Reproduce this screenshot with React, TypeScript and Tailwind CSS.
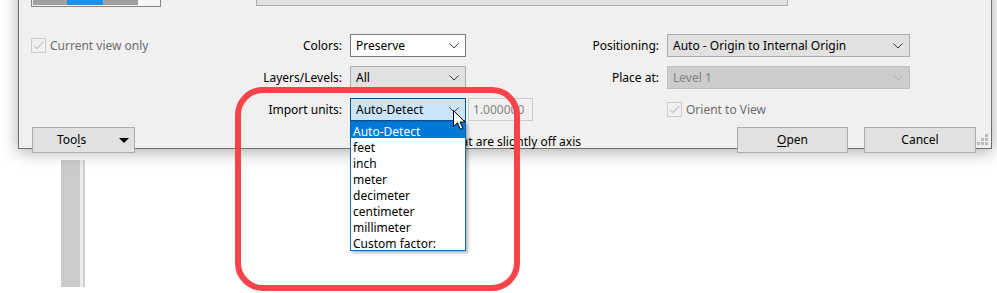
import React from "react";

function Chevron({ color = "#3c3c3c" }: { color?: string }) {
  return (
    <svg width="10" height="6" viewBox="0 0 10 6" className="shrink-0">
      <path d="M0.5 0.5 L5 5 L9.5 0.5" fill="none" stroke={color} strokeWidth="1" />
    </svg>
  );
}

function Check({ disabled = true }: { disabled?: boolean }) {
  return (
    <div className="w-[15px] h-[15px] border border-[#cccccc] bg-[#f0f0f0] flex items-center justify-center shrink-0">
      <svg width="11" height="9" viewBox="0 0 11 9">
        <path d="M0.8 4.6 L3.8 7.6 L10.2 0.8" fill="none" stroke={disabled ? "#c4c4c4" : "#333"} strokeWidth="1.2" />
      </svg>
    </div>
  );
}

function Select({
  value,
  variant = "normal",
  width,
}: {
  value: string;
  variant?: "white" | "normal" | "disabled" | "focus";
  width: string;
}) {
  const box = {
    white: "bg-white border-[#7a7a7a] text-black",
    normal: "bg-[#e1e1e1] border-[#adadad] text-black",
    disabled: "bg-[#cccccc] border-[#bfbfbf] text-[#838383]",
    focus: "bg-[#cce4f7] border-[#005499] text-black",
  }[variant];
  return (
    <div className={`${width} h-[23px] border ${box} flex items-center justify-between pl-[5px] pr-[6px]`}>
      <span className="leading-none pt-[1px]">{value}</span>
      <Chevron color={variant === "disabled" ? "#b0b0b0" : "#3c3c3c"} />
    </div>
  );
}

function Button({ children, width }: { children: React.ReactNode; width: string }) {
  return (
    <div className={`${width} h-[26px] bg-[#e1e1e1] border border-[#adadad] flex items-center justify-center text-black`}>
      {children}
    </div>
  );
}

const units = ["Auto-Detect", "feet", "inch", "meter", "decimeter", "centimeter", "millimeter", "Custom factor:"];

export default function App() {
  return (
    <div className="relative w-[997px] h-[293px] overflow-hidden bg-white font-['Noto_Sans',sans-serif] text-[12px] text-black">
      {/* window behind the dialog */}
      <div className="absolute left-[61px] top-[160px] h-[127px] flex">
        <div className="w-[19px] bg-[#cbcbcb]" />
        <div className="w-[3px] bg-[#ececec]" />
        <div className="w-[2px] bg-[#d0d0d0]" />
      </div>

      {/* dialog */}
      <div className="relative ml-[18px] w-[974px] h-[169px] bg-[#f0f0f0] border-l border-r border-b border-[#6e6e6e] shadow-[0_3px_16px_rgba(0,0,0,0.32)]">
        {/* top row, cut off */}
        <div className="flex items-end h-[27px] -mt-[20px] pl-[12px]">
          <div className="w-[130px] h-[27px] border border-[#878787] p-[1px] flex">
            <div className="w-[34px] bg-[#a0a0a0]" />
            <div className="w-[36px] bg-[#1e90f0]" />
            <div className="w-[35px] bg-[#a0a0a0]" />
            <div className="flex-1 bg-[#f6f6f6]" />
          </div>
          <div className="w-[95px] text-right mb-[8px] pr-[14px] leading-none">Files of type:</div>
          <div className="w-[532px] h-[24px] mb-[1px] bg-[#e1e1e1] border border-[#adadad] flex items-end pb-[7px] pl-[5px] leading-none">
            DWG Files (*.dwg)
          </div>
        </div>

        {/* row 1 */}
        <div className="flex items-center h-[23px] mt-[27px] pl-[12px]">
          <div className="w-[200px] flex items-center gap-[4px] text-[#6d6d6d]">
            <Check />
            <span className="pt-[1px]">Current view only</span>
          </div>
          <div className="w-[111px] text-right pt-[1px]">Colors:</div>
          <div className="ml-[8px]">
            <Select value="Preserve" variant="white" width="w-[116px]" />
          </div>
          <div className="w-[193px] text-right pt-[1px]">Positioning:</div>
          <div className="ml-[8px]">
            <Select value="Auto - Origin to Internal Origin" width="w-[243px]" />
          </div>
        </div>

        {/* row 2 */}
        <div className="flex items-center h-[23px] mt-[9px] pl-[12px]">
          <div className="w-[200px]" />
          <div className="w-[111px] text-right pt-[1px]">Layers/Levels:</div>
          <div className="ml-[8px]">
            <Select value="All" width="w-[116px]" />
          </div>
          <div className="w-[193px] text-right pt-[1px]">Place at:</div>
          <div className="ml-[8px]">
            <Select value="Level 1" variant="disabled" width="w-[243px]" />
          </div>
        </div>

        {/* row 3 */}
        <div className="flex items-center h-[23px] mt-[9px] pl-[12px]">
          <div className="w-[200px]" />
          <div className="w-[111px] text-right pt-[1px]">Import units:</div>
          <div className="ml-[8px]">
            <Select value="Auto-Detect" variant="focus" width="w-[116px]" />
          </div>
          <div className="w-[193px] flex">
            <div className="ml-[2px] w-[65px] h-[23px] border border-[#cccccc] bg-[#f0f0f0] text-[#838383] flex items-center pl-[4px] pt-[1px]">
              1.000000
            </div>
          </div>
          <div className="ml-[8px] flex items-center gap-[4px] text-[#6d6d6d]">
            <Check />
            <span className="pt-[1px]">Orient to View</span>
          </div>
        </div>

        {/* row 4 */}
        <div className="flex items-center h-[26px] mt-[6px] pl-[13px]">
          <Button width="w-[103px]">
            <div className="w-full flex items-center pl-[24px] pr-[5px]">
              <span className="flex-1">
                Too<span className="underline underline-offset-2">l</span>s
              </span>
              <svg width="10" height="5" viewBox="0 0 10 5">
                <path d="M0 0 L10 0 L5 5 Z" fill="#000" />
              </svg>
            </div>
          </Button>
          <div className="w-[446px] flex items-center justify-end gap-[4px] pt-[3px]">
            <Check disabled={false} />
            <span>Correct lines that are slightly off axis</span>
          </div>
          <div className="ml-[156px]">
            <Button width="w-[111px]">
              <span>
                <span className="underline underline-offset-2">O</span>pen
              </span>
            </Button>
          </div>
          <div className="ml-[16px]">
            <Button width="w-[112px]">Cancel</Button>
          </div>
        </div>

        {/* resize grip */}
        <div className="absolute right-[3px] bottom-[3px] grid grid-cols-3 gap-[1px]">
          <div className="w-[3px] h-[3px]" />
          <div className="w-[3px] h-[3px]" />
          <div className="w-[3px] h-[3px] bg-[#bcbcbc]" />
          <div className="w-[3px] h-[3px]" />
          <div className="w-[3px] h-[3px] bg-[#bcbcbc]" />
          <div className="w-[3px] h-[3px] bg-[#bcbcbc]" />
          <div className="w-[3px] h-[3px] bg-[#bcbcbc]" />
          <div className="w-[3px] h-[3px] bg-[#bcbcbc]" />
          <div className="w-[3px] h-[3px] bg-[#bcbcbc]" />
        </div>
      </div>

      {/* open dropdown list */}
      <div className="absolute left-[350px] top-[121px] w-[116px] border border-[#1565b0] bg-white shadow-[2px_2px_3px_rgba(0,0,0,0.3)]">
        {units.map((u, i) => (
          <div
            key={u}
            className={`h-[16px] flex items-center pl-[2px] pt-[3px] leading-none ${i === 0 ? "bg-[#0078d7] text-white" : "text-black"}`}
          >
            {u}
          </div>
        ))}
      </div>

      {/* mouse pointer */}
      <svg className="absolute left-[453px] top-[110px]" width="13" height="21" viewBox="0 0 13 21">
        <path
          d="M0.5 0.5 L0.5 16.5 L4.5 12.8 L7.3 19.3 L9.8 18.2 L7.1 12 L12 12 Z"
          fill="#fff"
          stroke="#000"
          strokeWidth="1"
          strokeLinejoin="round"
        />
      </svg>

      {/* red annotation */}
      <div className="absolute left-[235px] top-[87px] w-[285px] h-[204px] border-[6px] border-[#f8434a] rounded-[28px]" />
    </div>
  );
}
